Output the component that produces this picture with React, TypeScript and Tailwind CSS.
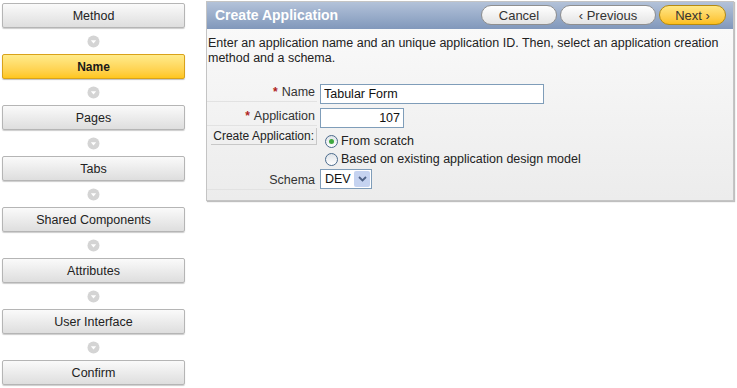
import React from 'react';

const steps = ['Method', 'Name', 'Pages', 'Tabs', 'Shared Components', 'Attributes', 'User Interface', 'Confirm'];

const StepArrow = () => (
  <div className="flex h-[26px] items-center justify-center">
    <svg width="13" height="13" viewBox="0 0 13 13">
      <circle cx="6.5" cy="6.5" r="6" fill="#d4d4d4" />
      <path d="M3.8 5.2h5.4L6.5 8.4z" fill="#fff" />
    </svg>
  </div>
);

const Label = ({ children, required }: { children: React.ReactNode; required?: boolean }) => (
  <div className="flex h-[21px] items-center justify-end border-b border-[#e2e2e2] pr-[2px] pt-[3px] text-[12.5px] leading-[15px] text-[#333]">
    {required && <span className="mr-[4px] text-[12px] font-bold text-[#b01f1f]">*</span>}
    {children}
  </div>
);

const Radio = ({ checked, label }: { checked?: boolean; label: string }) => (
  <label className="flex h-[18px] items-center gap-[3px] text-[12.5px] text-[#222]">
    <span className="flex h-[13px] w-[13px] items-center justify-center rounded-full border border-[#4a6a8c] bg-gradient-to-b from-[#dfe3e8] to-white">
      {checked && <span className="h-[5px] w-[5px] rounded-full bg-[#3fa83f]" />}
    </span>
    {label}
  </label>
);

export default function App() {
  return (
    <div className="flex h-[388px] w-[737px] bg-white font-['Liberation_Sans',Arial,sans-serif]">
      {/* шаги мастера */}
      <div className="ml-[2px] mt-[3px] flex w-[183px] flex-col">
        {steps.map((s, i) => (
          <React.Fragment key={s}>
            {i > 0 && <StepArrow />}
            <div
              className={
                s === 'Name'
                  ? 'flex h-[25px] items-center justify-center rounded-[2px] border border-[#d9a21a] bg-gradient-to-b from-[#ffeb8a] to-[#ffc619] pt-[1px] text-[12px] font-bold text-[#1a1a1a] shadow-[0_1px_1px_rgba(0,0,0,0.25)]'
                  : 'flex h-[25px] items-center justify-center rounded-[2px] border border-[#b5b5b5] bg-gradient-to-b from-[#fafafa] to-[#dedede] pt-[1px] text-[12.5px] text-[#222] shadow-[0_1px_1px_rgba(0,0,0,0.2)]'
              }
            >
              {s}
            </div>
          </React.Fragment>
        ))}
      </div>

      {/* панель */}
      <div className="ml-[21px] mt-[1px] h-[200px] w-[528px] border border-[#c4c4c4] bg-gradient-to-b from-[#fbfbfb] to-[#ececec] shadow-[1px_1px_1px_rgba(0,0,0,0.25)]">
        <div className="flex h-[27px] items-center justify-between bg-gradient-to-b from-[#b3c2d9] to-[#8198bb] pl-[8px] pr-[7px]">
          <span className="text-[14px] font-bold text-white">Create Application</span>
          <div className="mt-[-1px] flex items-center gap-[3px]">
            <button className="h-[20px] w-[76px] rounded-full border border-[#8f8f8f] bg-gradient-to-b from-white to-[#e4e4e4] text-[13px] text-[#333]">Cancel</button>
            <button className="h-[20px] w-[96px] rounded-full border border-[#8f8f8f] bg-gradient-to-b from-white to-[#e4e4e4] text-[13px] text-[#333]">‹ Previous</button>
            <button className="h-[20px] w-[67px] rounded-full border border-[#b58a10] bg-gradient-to-b from-[#ffe783] to-[#fcbf16] text-[13px] text-[#333]">Next ›</button>
          </div>
        </div>
        <p className="mt-[7px] px-[1px] text-[12.5px] leading-[15px] text-[#222]">
          Enter an application name and an unique application ID. Then, select an application creation method and a schema.
        </p>
        <div className="mt-[15px] grid grid-cols-[110px_auto] gap-x-[3px]">
          <Label required>Name</Label>
          <div className="h-[21px]">
            <input readOnly value="Tabular Form" className="h-[20px] w-[224px] border border-[#7f9db9] bg-white px-[3px] text-[12.5px] text-[#111] outline-none" />
          </div>
          <div className="mt-[3px]">
            <Label required>Application</Label>
          </div>
          <div className="mt-[3px] h-[21px]">
            <input readOnly value="107" className="h-[20px] w-[84px] border border-[#7f9db9] bg-white px-[3px] text-right text-[12.5px] text-[#111] outline-none" />
          </div>
          <div className="mt-[2px] flex justify-end">
            <div className="flex h-[17px] items-center border-b border-r border-[#c8c8c8] bg-[#f0f0f0] px-[2px] text-[12px] text-[#222]">Create Application:</div>
          </div>
          <div className="mt-[6px] flex flex-col pl-[5px]">
            <Radio checked label="From scratch" />
            <Radio label="Based on existing application design model" />
          </div>
          <div className="mt-[1px]">
            <Label>Schema</Label>
          </div>
          <div className="mt-[1px] flex h-[20px] w-[52px] items-center border border-[#7f9db9] bg-white pl-[4px] text-[12.5px] text-[#111]">
            <span className="flex-1">DEV</span>
            <span className="mr-[1px] flex h-[16px] w-[16px] items-center justify-center rounded-[2px] bg-[#c5d3f0]">
              <svg width="9" height="6" viewBox="0 0 9 6">
                <path d="M1 1l3.5 3.5L8 1" fill="none" stroke="#4d6185" strokeWidth="1.8" />
              </svg>
            </span>
          </div>
        </div>
      </div>
    </div>
  );
}
